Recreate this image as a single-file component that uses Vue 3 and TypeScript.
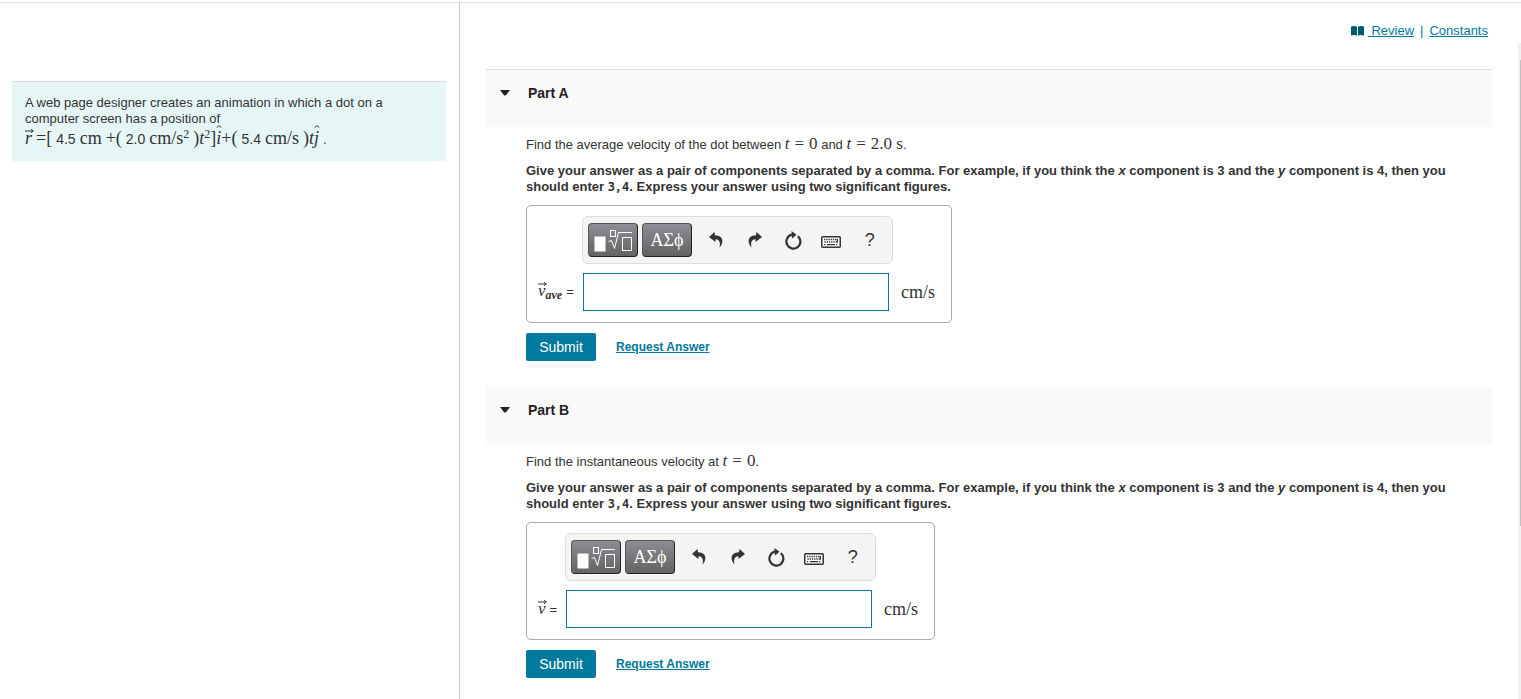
<script setup lang="ts">
import { ref } from 'vue'

interface Part {
  id: string
  title: string
  subscript: string
  answer: string
}

const parts = ref<Part[]>([
  { id: 'a', title: 'Part A', subscript: 'ave', answer: '' },
  { id: 'b', title: 'Part B', subscript: '', answer: '' },
])
</script>

<template>
  <div class="page">
    <aside class="problem">
      <div class="statement">
        <p>A web page designer creates an animation in which a dot on a computer screen has a position of</p>
        <p class="equation">
          <span class="accented"><i class="math">r</i><svg class="arrow" viewBox="0 0 9 4"><path d="M0 2H8M6 .3L8.3 2L6 3.7" /></svg></span>
          <span class="math sp">=[</span><span class="num">4.5</span><span class="math unit-in">cm</span><span class="math">+(</span><span class="num">2.0</span><span class="math unit-in">cm/s<sup>2</sup></span><span class="math">)<i>t</i><sup>2</sup>]</span><span class="accented"><i class="math">i</i><svg class="hat" viewBox="0 0 6 3"><path d="M.7 2.6L3 .6L5.3 2.6" /></svg></span><span class="math">+(</span><span class="num">5.4</span><span class="math unit-in">cm/s</span><span class="math">)<i>t</i></span><span class="accented"><i class="math">j</i><svg class="hat" viewBox="0 0 6 3"><path d="M.7 2.6L3 .6L5.3 2.6" /></svg></span><span class="stop">.</span>
        </p>
      </div>
    </aside>

    <main class="content">
      <nav class="links">
        <svg class="book" viewBox="0 0 13 10"><path d="M0 .5Q3.5-.5 6 .7V9.7Q3.500 8.500 0 9.500ZM7 .7Q9.500-.5 13 .5V9.500Q9.500 8.500 7 9.700Z" /></svg>
        <a href="#review">&nbsp;Review</a><span class="bar">|</span><a href="#constants">Constants</a>
      </nav>

      <section v-for="part in parts" :key="part.id" class="part">
        <header class="part-head">
          <button type="button" class="toggle" :aria-label="'Collapse ' + part.title">
            <svg viewBox="0 0 10 6"><path d="M0 0H10L6 5.200Q5 6 4 5.200Z" /></svg>
          </button>
          <h2>{{ part.title }}</h2>
        </header>
        <div class="part-body">
          <p v-if="part.id === 'a'" class="prompt">
            Find the average velocity of the dot between <span class="math"><i>t</i><span class="rel">=</span>0</span> and <span class="math"><i>t</i><span class="rel">=</span>2.0 s</span>.
          </p>
          <p v-else class="prompt">
            Find the instantaneous velocity at <span class="math"><i>t</i><span class="rel">=</span>0</span>.
          </p>
          <p class="instructions">
            Give your answer as a pair of components separated by a comma. For example, if you think the <i>x</i> component is 3 and the <i>y</i> component is 4, then you should enter <code>3,4</code>. Express your answer using two significant figures.
          </p>

          <div class="answer" :class="{ wide: part.subscript }">
            <div class="toolbar">
              <button type="button" class="palette" aria-label="Templates">
                <svg class="root" viewBox="0 0 40 24">
                  <rect x="2" y="9" width="10" height="14" fill="#fff" />
                  <rect x="17.500" y="2.500" width="5" height="6" />
                  <path d="M15.500 13.500L18.500 12.500L21.500 20.500L25.500 4.500H39" />
                  <rect x="29.500" y="9.500" width="9" height="13" />
                </svg>
              </button>
              <button type="button" class="palette greek">ΑΣϕ</button>
              <div class="tools">
                <button type="button" aria-label="Undo">
                  <svg class="turn" viewBox="0 0 14 16"><path d="M5.500 0L0 5L6.500 10V7.200C10 7.300 11.800 9.500 10.500 15.500C15.500 9.500 14 3.500 6 3.200Z" /></svg>
                </button>
                <button type="button" aria-label="Redo">
                  <svg class="turn" viewBox="0 0 14 16"><path d="M8.500 0L14 5L7.500 10V7.200C4 7.300 2.200 9.500 3.500 15.500C-1.500 9.500 0 3.500 8 3.200Z" /></svg>
                </button>
                <button type="button" aria-label="Reset">
                  <svg class="reset" viewBox="0 0 18 19"><path d="M13.800 5.100A7 7 0 1 1 8 3.700" fill="none" stroke="#333" stroke-width="2.200" /><path d="M7.500 0L12.500 3.800L8 7.500Z" /></svg>
                </button>
                <button type="button" aria-label="Keyboard shortcuts">
                  <svg class="keys" viewBox="0 0 20 12">
                    <rect x=".75" y=".75" width="18.500" height="10.500" rx="1" fill="#fff" stroke="#333" stroke-width="1.500" />
                    <path d="M3 3.500H17M3.500 6H17M3 8.700H5M15 8.700H17" fill="none" stroke="#333" stroke-width="1.300" stroke-dasharray="1.300 .9" />
                    <path d="M6 8.700H14M16.300 3V6.500" fill="none" stroke="#333" stroke-width="1.300" />
                  </svg>
                </button>
                <button type="button" class="help" aria-label="Help">?</button>
              </div>
            </div>
            <label class="symbol" :for="'answer-' + part.id">
              <span class="accented"><i class="math">v</i><svg class="arrow" viewBox="0 0 9 4"><path d="M0 2H8M6 .3L8.3 2L6 3.7" /></svg></span><sub v-if="part.subscript" class="math">{{ part.subscript }}</sub>
              <span class="equals">=</span>
            </label>
            <input :id="'answer-' + part.id" v-model="part.answer" type="text" autocomplete="off" />
            <span class="math unit">cm/s</span>
          </div>

          <div class="actions">
            <button type="button" class="submit">Submit</button>
            <a href="#request">Request Answer</a>
          </div>
        </div>
      </section>
    </main>
    <div class="scroll-track"><div class="scroll-thumb"></div></div>
  </div>
</template>

<style>
body {
  background: #fff;
}
</style>

<style scoped>
.page {
  display: flex;
  box-sizing: border-box;
  height: 100vh;
  overflow: hidden;
  border-top: 2px solid #fff;
  box-shadow: inset 0 1px #ddd;
  font: 13px/16px "Liberation Sans", Arial, sans-serif;
  color: #333;
}
p, h2 {
  margin: 0;
}
button {
  margin: 0;
  padding: 0;
  border: 0;
  background: none;
  color: inherit;
  font: inherit;
  cursor: pointer;
}
a {
  color: #007a9c;
}
.math {
  font-family: "Liberation Serif", "Times New Roman", serif;
  font-size: 17px;
}
.problem {
  box-sizing: border-box;
  flex: 0 0 460px;
  padding: 79px 13px 0 12px;
  border-right: 1px solid #c4c8cf;
}
.statement {
  box-sizing: border-box;
  min-height: 80px;
  padding: 13px 50px 8px 13px;
  border-top: 1px solid #d8dfdf;
  background: #e6f6f6;
}
.equation {
  display: flex;
  align-items: baseline;
  height: 24px;
  line-height: 22px;
  white-space: nowrap;
}
.equation .math {
  font-size: 18px;
}
.equation sup {
  font-size: 12px;
  line-height: 0;
  vertical-align: 6px;
}
.equation .sp {
  margin-left: 4px;
}
.num {
  margin-left: 4px;
  font-size: 14px;
}
.unit-in {
  margin: 0 4px;
}
.stop {
  margin-left: 4px;
}
.accented {
  position: relative;
  display: inline-block;
}
.accented svg {
  position: absolute;
  left: 0;
  fill: none;
  stroke: #333;
}
.arrow {
  top: 2px;
  width: 9px;
  height: 4px;
}
.hat {
  top: -2px;
  width: 6px;
  height: 3px;
}
.content {
  flex: 1;
  min-width: 0;
  padding: 21px 26px 0;
}
.links {
  display: flex;
  align-items: center;
  justify-content: flex-end;
  height: 16px;
  margin-right: 4px;
  padding-bottom: 30px;
}
.links .book {
  width: 13px;
  height: 10px;
  margin-right: 4px;
  fill: #005a70;
}
.links .bar {
  margin: 0 6px;
  color: #007a9c;
}
.part-head {
  display: flex;
  box-sizing: border-box;
  height: 57px;
  padding: 15px 19px 0 14px;
  background: #f9f9f9;
}
.part:first-of-type .part-head {
  height: 58px;
  border-top: 1px solid #ddd;
}
.toggle {
  width: 10px;
  height: 16px;
}
.toggle svg {
  display: block;
  width: 10px;
  height: 6px;
  fill: #222;
}
.part-head h2 {
  margin-left: 18px;
  font-size: 14px;
  line-height: 16px;
  color: #222;
}
.part-body {
  padding: 8px 40px 26px;
}
.prompt {
  line-height: 18px;
}
.rel {
  margin: 0 5px;
}
.instructions {
  margin-top: 9px;
  font-weight: bold;
}
.instructions code {
  font: bold 12px "DejaVu Sans Mono", monospace;
  line-height: 1;
}
.answer {
  display: inline-grid;
  grid-template-columns: 28px 306px auto;
  align-items: center;
  box-sizing: border-box;
  margin-top: 10px;
  padding: 10px 15px 11px 11px;
  border: 1px solid #aaa;
  border-radius: 5px;
  vertical-align: top;
}
.answer.wide {
  grid-template-columns: 45px 306px auto;
}
.toolbar {
  grid-column: 2 / 4;
  display: flex;
  align-items: center;
  gap: 4px;
  box-sizing: border-box;
  width: 311px;
  height: 48px;
  margin: 0 0 9px -1px;
  padding: 0 3px 0 5px;
  border: 1px solid #ddd;
  border-radius: 6px;
  background: #f4f4f4;
}
.palette {
  box-sizing: border-box;
  width: 50px;
  height: 34px;
  border: 1px solid #555;
  border-right-color: #222;
  border-bottom-color: #222;
  border-radius: 4px;
  background: linear-gradient(#8e8c94, #636363);
  color: #fff;
}
.greek {
  font: 18px/30px "Liberation Serif", "Times New Roman", serif;
}
.root {
  display: block;
  width: 40px;
  height: 24px;
  margin: 0 auto;
  fill: none;
  stroke: #fff;
}
.tools {
  display: grid;
  grid-template-columns: repeat(5, 1fr);
  flex: 1;
  margin-left: 1px;
}
.tools button {
  display: grid;
  place-items: center;
  height: 34px;
}
.tools svg {
  fill: #333;
}
.turn {
  width: 14px;
  height: 16px;
}
.reset {
  width: 18px;
  height: 19px;
}
.keys {
  width: 20px;
  height: 12px;
  margin-top: 4px;
}
.tools .help {
  font-size: 18px;
}
.symbol {
  display: flex;
  align-items: baseline;
}
.symbol .arrow {
  top: -1px;
}
.symbol sub {
  padding-top: 6px;
  font-size: 12px;
  font-style: italic;
  font-weight: bold;
  line-height: 1;
  align-self: center;
}
.equals {
  margin-left: 4px;
}
.answer input {
  box-sizing: border-box;
  width: 100%;
  height: 38px;
  padding: 4px 8px;
  border: 1px solid #007a9c;
  border-radius: 0;
  background: #fff;
  font: inherit;
  outline: 0;
}
.answer .unit {
  width: 35px;
  margin-left: 12px;
  font-size: 18px;
}
.actions {
  display: flex;
  align-items: center;
  gap: 20px;
  margin-top: 10px;
}
.submit {
  width: 70px;
  height: 28px;
  border-radius: 2px;
  background: #007a9c;
  color: #fff;
  font-size: 14px;
}
.actions a {
  font-size: 12px;
  font-weight: bold;
}
.scroll-track {
  flex: 0 0 3px;
  margin-top: 41px;
  background: #f1f1f1;
}
.scroll-thumb {
  height: 71%;
  margin: 17px 0 0 2px;
  background: #c1c1c1;
}
</style>
